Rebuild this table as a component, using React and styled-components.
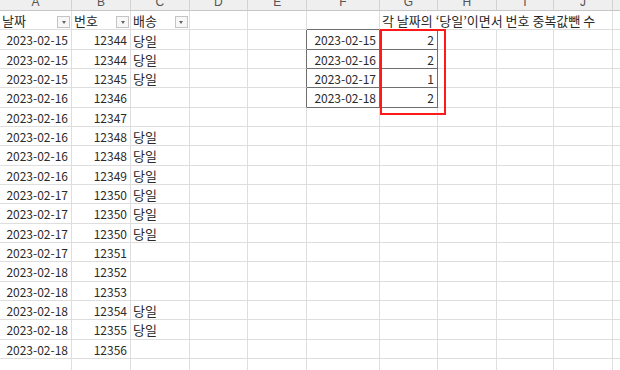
import React from 'react';
import styled, { createGlobalStyle } from 'styled-components';

const GlobalStyle = createGlobalStyle`
  html, body {
    margin: 0;
    padding: 0;
    background: #ffffff;
    overflow: hidden;
  }
  body {
    font-family: "Noto Sans CJK KR", "Liberation Sans", sans-serif;
  }
`;

const COLS = ['A', 'B', 'C', 'D', 'E', 'F', 'G', 'H', 'I', 'J', 'K'];
const COL_WIDTHS = [72, 59, 58.5, 58.8, 58.7, 73, 58, 58.7, 57.6, 58.7, 40];
const GRID = '#dedede';
const BOX = '#6e6e6e';

const Sheet = styled.div`
  position: relative;
  width: 620px;
  height: 370px;
  overflow: hidden;
  background: #fff;
`;

const Grid = styled.div`
  display: grid;
  grid-template-columns: ${COL_WIDTHS.map((w) => `${w}px`).join(' ')};
  grid-template-rows: 11px;
  grid-auto-rows: 19.33px;
`;

const HeaderCell = styled.div`
  box-sizing: border-box;
  background: #efefef;
  border-right: 1px solid #d2d2d2;
  border-bottom: 1px solid #c6c6c6;
  display: flex;
  align-items: flex-end;
  justify-content: center;
  overflow: hidden;
  color: #555;
  font-family: "Liberation Sans", sans-serif;
  font-size: 12px;
  line-height: 14px;
  padding-bottom: 1px;
`;

const Cell = styled.div`
  box-sizing: border-box;
  border-right: 1px solid ${(p) => p.$right};
  border-bottom: 1px solid ${(p) => p.$bottom};
  display: flex;
  align-items: center;
  justify-content: ${(p) => (p.$align === 'right' ? 'flex-end' : 'flex-start')};
  padding: 1px 3px 0 2px;
  color: #2a2a2a;
  font-size: ${(p) => (p.$align === 'right' ? '12px' : '13px')};
  white-space: nowrap;
  overflow: ${(p) => (p.$spill ? 'visible' : 'hidden')};
  position: relative;
  z-index: ${(p) => (p.$spill ? 1 : 'auto')};
`;

const FilterButton = styled.span`
  box-sizing: border-box;
  margin-left: auto;
  margin-right: -2px;
  align-self: flex-end;
  margin-bottom: 1px;
  width: 13px;
  height: 12px;
  border: 1px solid #c4c4c4;
  background: #f7f7f7;
  display: flex;
  align-items: center;
  justify-content: center;

  &::after {
    content: '';
    width: 0;
    height: 0;
    border-left: 2.5px solid transparent;
    border-right: 2.5px solid transparent;
    border-top: 3px solid #666;
  }
`;

const Highlight = styled.div`
  position: absolute;
  left: 380px;
  top: 29px;
  width: 66px;
  height: 86px;
  box-sizing: border-box;
  border: 2.5px solid #ff1a1a;
  pointer-events: none;
  z-index: 2;
`;

const rows = [
  ['2023-02-15', '12344', '당일'],
  ['2023-02-15', '12344', '당일'],
  ['2023-02-15', '12345', '당일'],
  ['2023-02-16', '12346', ''],
  ['2023-02-16', '12347', ''],
  ['2023-02-16', '12348', '당일'],
  ['2023-02-16', '12348', '당일'],
  ['2023-02-16', '12349', '당일'],
  ['2023-02-17', '12350', '당일'],
  ['2023-02-17', '12350', '당일'],
  ['2023-02-17', '12350', '당일'],
  ['2023-02-17', '12351', ''],
  ['2023-02-18', '12352', ''],
  ['2023-02-18', '12353', ''],
  ['2023-02-18', '12354', '당일'],
  ['2023-02-18', '12355', '당일'],
  ['2023-02-18', '12356', ''],
];

const summary = [
  ['2023-02-15', '2'],
  ['2023-02-16', '2'],
  ['2023-02-17', '1'],
  ['2023-02-18', '2'],
];

const TOTAL_ROWS = 20;

// F2:G5 carries a thin dark border
const isBoxed = (r, c) => r >= 1 && r <= 4 && (c === 5 || c === 6);

const cellContent = (r, c) => {
  if (r === 0) {
    if (c === 0) return { text: '날짜', filter: true };
    if (c === 1) return { text: '번호', filter: true };
    if (c === 2) return { text: '배송', filter: true };
    if (c === 6) return { text: '각 날짜의 ‘당일’이면서 번호 중복값뺀 수', spill: true };
    return { text: '' };
  }
  const data = rows[r - 1];
  if (data) {
    if (c === 0) return { text: data[0], align: 'right' };
    if (c === 1) return { text: data[1], align: 'right' };
    if (c === 2) return { text: data[2] };
  }
  const sum = summary[r - 1];
  if (sum) {
    if (c === 5) return { text: sum[0], align: 'right' };
    if (c === 6) return { text: sum[1], align: 'right' };
  }
  return { text: '' };
};

const App = () => {
  const cells = [];
  for (let r = 0; r < TOTAL_ROWS; r++) {
    for (let c = 0; c < COLS.length; c++) {
      const { text, align, filter, spill } = cellContent(r, c);
      let right = isBoxed(r, c) || isBoxed(r, c + 1) ? BOX : GRID;
      // title text in G1 overflows into H1:J1, hiding those gridlines
      if (r === 0 && c >= 6 && c <= 8) right = 'transparent';
      const bottom = isBoxed(r, c) || isBoxed(r + 1, c) ? BOX : GRID;
      cells.push(
        <Cell key={`${r}-${c}`} $right={right} $bottom={bottom} $align={align} $spill={spill}>
          {text}
          {filter && <FilterButton />}
        </Cell>
      );
    }
  }

  return (
    <>
      <GlobalStyle />
      <Sheet>
        <Grid>
          {COLS.map((col) => (
            <HeaderCell key={col}>{col}</HeaderCell>
          ))}
          {cells}
        </Grid>
        <Highlight />
      </Sheet>
    </>
  );
};

export default App;
